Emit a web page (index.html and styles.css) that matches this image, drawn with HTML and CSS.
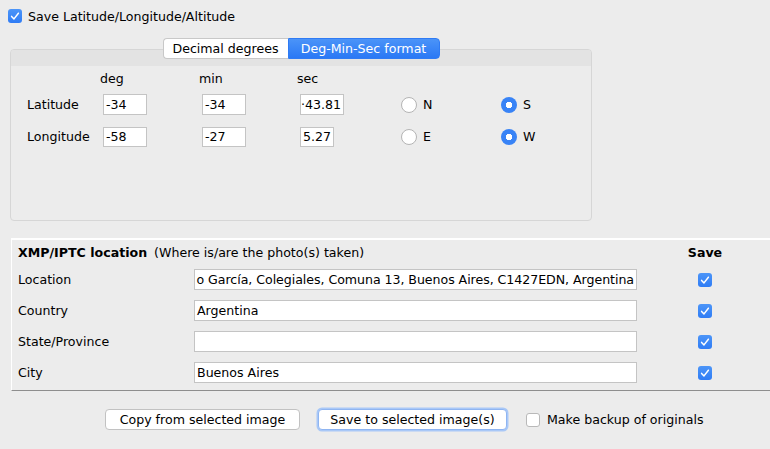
FILE: index.html
```html
<!DOCTYPE html>
<html>
<head>
<meta charset="utf-8">
<link rel="stylesheet" href="styles.css">
</head>
<body>
<div class="save-row">
  <span class="cb checked"><svg viewBox="0 0 14 14" width="14" height="14"><path d="M3.6 7.4 L6 9.9 L10.4 4.2" fill="none" stroke="#fff" stroke-width="1.5" stroke-linecap="round" stroke-linejoin="round"/></svg></span>
  <span>Save Latitude/Longitude/Altitude</span>
</div>

<div class="tabs">
  <div class="tab">Decimal degrees</div>
  <div class="tab active">Deg-Min-Sec format</div>
</div>

<div class="panel">
  <div class="band"></div>
  <div class="coords">
    <div class="hdr-row">
      <span class="c-label"></span>
      <span class="c-deg">deg</span>
      <span class="c-min">min</span>
      <span class="c-sec">sec</span>
    </div>
    <div class="row">
      <span class="c-label">Latitude</span>
      <span class="c-deg"><span class="field w44">-34</span></span>
      <span class="c-min"><span class="field w44">-34</span></span>
      <span class="c-sec"><span class="field w44 clipl">&#183;43.81</span></span>
      <span class="c-dir"><span class="radio"></span>N</span>
      <span class="c-dir"><span class="radio on"></span>S</span>
    </div>
    <div class="row">
      <span class="c-label">Longitude</span>
      <span class="c-deg"><span class="field w44">-58</span></span>
      <span class="c-min"><span class="field w44">-27</span></span>
      <span class="c-sec"><span class="field w34">5.27</span></span>
      <span class="c-dir"><span class="radio"></span>E</span>
      <span class="c-dir"><span class="radio on"></span>W</span>
    </div>
  </div>
</div>

<div class="xmp">
  <div class="xmp-grid">
    <div class="xmp-head"><b>XMP/IPTC location</b><span class="sub">(Where is/are the photo(s) taken)</span></div>
    <div class="save-h"><b>Save</b></div>

    <div class="lbl">Location</div>
    <div class="tf end"><span>o García, Colegiales, Comuna 13, Buenos Aires, C1427EDN, Argentina</span></div>
    <div class="sv"><span class="cb checked"><svg viewBox="0 0 14 14" width="14" height="14"><path d="M3.6 7.4 L6 9.9 L10.4 4.2" fill="none" stroke="#fff" stroke-width="1.5" stroke-linecap="round" stroke-linejoin="round"/></svg></span></div>

    <div class="lbl">Country</div>
    <div class="tf"><span>Argentina</span></div>
    <div class="sv"><span class="cb checked"><svg viewBox="0 0 14 14" width="14" height="14"><path d="M3.6 7.4 L6 9.9 L10.4 4.2" fill="none" stroke="#fff" stroke-width="1.5" stroke-linecap="round" stroke-linejoin="round"/></svg></span></div>

    <div class="lbl">State/Province</div>
    <div class="tf"><span></span></div>
    <div class="sv"><span class="cb checked"><svg viewBox="0 0 14 14" width="14" height="14"><path d="M3.6 7.4 L6 9.9 L10.4 4.2" fill="none" stroke="#fff" stroke-width="1.5" stroke-linecap="round" stroke-linejoin="round"/></svg></span></div>

    <div class="lbl">City</div>
    <div class="tf"><span>Buenos Aires</span></div>
    <div class="sv"><span class="cb checked"><svg viewBox="0 0 14 14" width="14" height="14"><path d="M3.6 7.4 L6 9.9 L10.4 4.2" fill="none" stroke="#fff" stroke-width="1.5" stroke-linecap="round" stroke-linejoin="round"/></svg></span></div>
  </div>
</div>

<div class="buttons">
  <div class="btn copy">Copy from selected image</div>
  <div class="btn save focus">Save to selected image(s)</div>
  <span class="cb"></span>
  <span class="backup">Make backup of originals</span>
</div>
</body>
</html>
```

FILE: styles.css
```css
html, body {
  margin: 0;
  padding: 0;
  background: #ececec;
  width: 770px;
  height: 449px;
  overflow: hidden;
  font-family: "DejaVu Sans", "Noto Sans", sans-serif;
  font-size: 12.6px;
  color: #000;
}

.cb {
  display: inline-flex;
  width: 14px;
  height: 14px;
  box-sizing: border-box;
  border-radius: 3px;
  border: 1px solid #b9b9b9;
  background: #fff;
  flex: none;
}
.cb.checked {
  border: none;
  background: linear-gradient(#4c95f8, #2f7cf5);
}
.cb svg { display: block; }

.save-row {
  display: flex;
  align-items: center;
  gap: 6px;
  height: 14px;
  margin-top: 9px;
  padding-left: 8px;
}

.tabs {
  position: relative;
  z-index: 1;
  display: flex;
  justify-content: center;
  width: 582px;
  margin: 15px 0 0 10px;
  height: 21px;
}
.tab {
  height: 21px;
  box-sizing: border-box;
  display: flex;
  align-items: center;
  justify-content: center;
  background: #fff;
  border: 1px solid #c8c8c8;
}
.tab:first-child {
  width: 125px;
  border-radius: 4px 0 0 4px;
  border-right: none;
}
.tab.active {
  width: 152px;
  background: linear-gradient(#4b94f8, #2a78f5);
  border-color: #2f7bf4;
  color: #fff;
  border-radius: 0 4px 4px 0;
}

.panel {
  margin: -10px 0 0 10px;
  width: 582px;
  height: 172px;
  box-sizing: border-box;
  border: 1px solid #d6d6d6;
  border-radius: 4px;
  background: #ececec;
}
.band {
  height: 16px;
  background: #e3e3e3;
  border-radius: 3px 3px 0 0;
}
.coords {
  padding: 2px 0 0 16px;
  display: flex;
  flex-direction: column;
  gap: 11px;
}
.hdr-row, .row {
  display: flex;
  align-items: center;
}
.hdr-row { height: 20px; margin: 0 0 -5px -3px; }
.row { height: 21px; }
.c-label { width: 76px; flex: none; }
.c-deg { width: 99px; flex: none; }
.c-min { width: 98px; flex: none; }
.c-sec { width: 101px; flex: none; }
.c-dir {
  width: 100px;
  flex: none;
  display: flex;
  align-items: center;
  gap: 6px;
}
.field {
  display: flex;
  align-items: center;
  height: 21px;
  box-sizing: border-box;
  border: 1px solid #c4c4c4;
  background: #fff;
  padding-left: 2px;
  overflow: hidden;
  white-space: nowrap;
}
.w44 { width: 44px; }
.w34 { width: 34px; }
.clipl { padding-left: 0; }
.row:nth-child(3) .field { height: 20px; }

.radio {
  width: 16px;
  height: 16px;
  box-sizing: border-box;
  border-radius: 50%;
  border: 1px solid #b4b4b4;
  background: #fff;
  flex: none;
}
.radio.on {
  border: none;
  background: radial-gradient(circle, #fff 0 3px, #3883f6 3.5px);
}

.xmp {
  margin: 17px 0 0 11px;
  width: 759px;
  height: 153px;
  box-sizing: border-box;
  border-top: 2px solid #fff;
  border-left: 1px solid #fff;
  border-bottom: 1px solid #8e8e8e;
  padding-left: 6px;
}
.xmp-grid {
  display: grid;
  grid-template-columns: 176px 443px 1fr;
  grid-template-rows: 24px repeat(4, 31px);
  align-items: center;
}
.xmp-head {
  grid-column: 1 / 3;
  display: flex;
  gap: 7px;
}
.sub { font-weight: normal; }
.save-h, .sv {
  display: flex;
  justify-content: center;
  padding-left: 3px;
}
.tf {
  height: 21px;
  box-sizing: border-box;
  border: 1px solid #c4c4c4;
  background: #fff;
  display: flex;
  align-items: center;
  padding: 0 2px;
  overflow: hidden;
  white-space: nowrap;
}
.tf.end { justify-content: flex-end; letter-spacing: -0.05px; }

.buttons {
  display: flex;
  align-items: center;
  margin-top: 18px;
  padding-left: 105px;
  height: 21px;
}
.btn {
  height: 21px;
  box-sizing: border-box;
  display: flex;
  align-items: center;
  justify-content: center;
  background: #fff;
  border: 1px solid #c2c2c2;
  border-radius: 4px;
}
.btn.copy { width: 195px; margin-right: 18px; }
.btn.save {
  width: 189px;
  margin-right: 19px;
  border-color: #8fb5f2;
  box-shadow: 0 0 0 1.5px #a9c8f7;
}
.buttons .cb { margin-right: 7px; }
```
